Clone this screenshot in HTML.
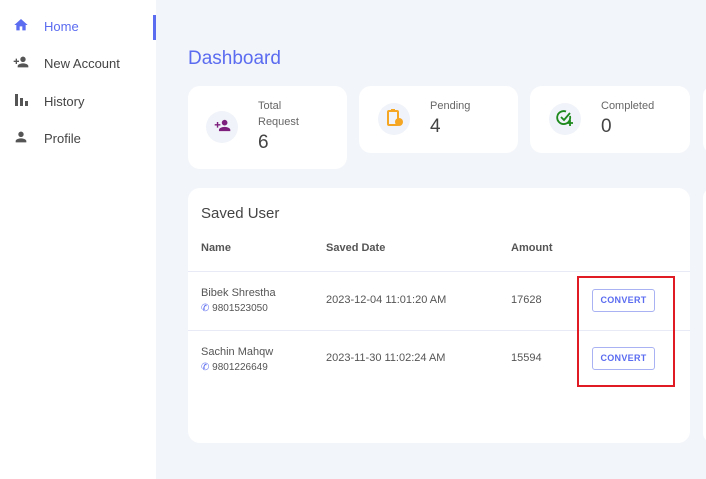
<!DOCTYPE html><html><head><style>
*{margin:0;padding:0;box-sizing:border-box}
body{width:706px;height:479px;overflow:hidden;background:#f2f5fa;font-family:"Liberation Sans",sans-serif;position:relative}
.a{position:absolute}
.side{left:0;top:0;width:156px;height:479px;background:#fff}
.card{background:#fff;border-radius:12px}
.ic{width:32px;height:32px;border-radius:50%;background:#f0f3f9}
.lbl{font-size:11px;color:#666;line-height:16px}
.num{font-size:19px;color:#444}
.th{font-size:11px;color:#555;font-weight:bold;top:242px}
.td{font-size:11px;color:#555}
.btn{width:63px;height:23px;border:1px solid #a9b2f2;border-radius:3px;color:#5b6cf0;font-size:9px;font-weight:bold;text-align:center;line-height:21px;letter-spacing:.3px}
</style></head><body>
<div class="a side"></div>
<div class="a" style="left:153px;top:15px;width:3px;height:25px;background:#5b6cf0"></div>
<svg class="a" style="left:12px;top:17px" width="18" height="16" viewBox="0 0 24 24"><path d="M10 20v-6h4v6h5v-8h3L12 3 2 12h3v8z" fill="#5b6cf0"/></svg>
<div class="a" style="left:44px;top:19px;font-size:13px;color:#5b6cf0">Home</div>
<svg class="a" style="left:11px;top:54px" width="20" height="16" viewBox="0 0 24 24"><path d="M15 12c2.2 0 4-1.8 4-4s-1.8-4-4-4-4 1.8-4 4 1.8 4 4 4zm-9-2V7H4v3H1v2h3v3h2v-3h3v-2H6zm9 4c-2.7 0-8 1.3-8 4v2h16v-2c0-2.7-5.3-4-8-4z" fill="#555"/></svg>
<div class="a" style="left:44px;top:56px;font-size:13px;color:#444">New Account</div>
<svg class="a" style="left:14px;top:93px" width="16" height="14" viewBox="0 0 16 14"><rect x="1" y="1" width="3" height="12" fill="#555"/><rect x="6" y="5" width="3" height="8" fill="#555"/><rect x="11" y="8" width="3" height="5" fill="#555"/></svg>
<div class="a" style="left:44px;top:94px;font-size:13px;color:#444">History</div>
<svg class="a" style="left:12px;top:129px" width="18" height="16" viewBox="0 0 24 24"><path d="M12 12c2.2 0 4-1.8 4-4s-1.8-4-4-4-4 1.8-4 4 1.8 4 4 4zm0 2c-2.7 0-8 1.3-8 4v2h16v-2c0-2.7-5.3-4-8-4z" fill="#555"/></svg>
<div class="a" style="left:44px;top:131px;font-size:13px;color:#444">Profile</div>

<div class="a" style="left:188px;top:48px;font-size:19px;color:#5b6cf0">Dashboard</div>

<div class="a card" style="left:188px;top:86px;width:159px;height:83px"></div>
<div class="a ic" style="left:206px;top:111px"></div>
<svg class="a" style="left:213px;top:117px" width="19" height="17" viewBox="0 0 24 24"><path d="M15 12c2.2 0 4-1.8 4-4s-1.8-4-4-4-4 1.8-4 4 1.8 4 4 4zm-9-2V7H4v3H1v2h3v3h2v-3h3v-2H6zm9 4c-2.7 0-8 1.3-8 4v2h16v-2c0-2.7-5.3-4-8-4z" fill="#7d1f7d"/></svg>
<div class="a lbl" style="left:258px;top:98px">Total<br>Request</div>
<div class="a num" style="left:258px;top:132px">6</div>

<div class="a card" style="left:359px;top:86px;width:159px;height:67px"></div>
<div class="a ic" style="left:378px;top:103px"></div>
<svg class="a" style="left:386px;top:108px" width="18" height="20" viewBox="0 0 18 20"><rect x="2" y="3" width="10" height="14" rx="1" fill="none" stroke="#f5a623" stroke-width="2"/><rect x="5" y="1" width="4" height="3" fill="#f5a623"/><circle cx="13" cy="14" r="4" fill="#f5a623"/></svg>
<div class="a lbl" style="left:430px;top:98px">Pending</div>
<div class="a num" style="left:430px;top:116px">4</div>

<div class="a card" style="left:530px;top:86px;width:160px;height:67px"></div>
<div class="a ic" style="left:549px;top:103px"></div>
<svg class="a" style="left:556px;top:109px" width="18" height="18" viewBox="0 0 18 18"><path d="M14 7A6.5 6.5 0 1 1 10 2.5" fill="none" stroke="#1e8a1e" stroke-width="1.8"/><path d="M5 8l3 3 6-7" fill="none" stroke="#1e8a1e" stroke-width="1.8"/><path d="M14 11v6M11 14h6" stroke="#1e8a1e" stroke-width="1.8"/></svg>
<div class="a lbl" style="left:601px;top:98px">Completed</div>
<div class="a num" style="left:601px;top:116px">0</div>
<div class="a card" style="left:703px;top:86px;width:20px;height:67px"></div>

<div class="a card" style="left:188px;top:188px;width:502px;height:255px"></div>
<div class="a card" style="left:703px;top:188px;width:20px;height:255px"></div>
<div class="a" style="left:201px;top:205px;font-size:15px;color:#444">Saved User</div>
<div class="a th" style="left:201px">Name</div>
<div class="a th" style="left:326px">Saved Date</div>
<div class="a th" style="left:511px">Amount</div>
<div class="a" style="left:188px;top:271px;width:502px;height:1px;background:#e8ebf5"></div>
<div class="a" style="left:188px;top:330px;width:502px;height:1px;background:#e8ebf5"></div>

<div class="a td" style="left:201px;top:287px">Bibek Shrestha</div>
<div class="a" style="left:201px;top:303px;font-size:10px;color:#555"><span style="color:#5b6cf0">&#9990;</span> 9801523050</div>
<div class="a td" style="left:326px;top:294px">2023-12-04 11:01:20 AM</div>
<div class="a td" style="left:511px;top:294px">17628</div>
<div class="a btn" style="left:592px;top:289px">CONVERT</div>

<div class="a td" style="left:201px;top:346px">Sachin Mahqw</div>
<div class="a" style="left:201px;top:362px;font-size:10px;color:#555"><span style="color:#5b6cf0">&#9990;</span> 9801226649</div>
<div class="a td" style="left:326px;top:352px">2023-11-30 11:02:24 AM</div>
<div class="a td" style="left:511px;top:352px">15594</div>
<div class="a btn" style="left:592px;top:347px">CONVERT</div>

<div class="a" style="left:577px;top:276px;width:98px;height:111px;border:2px solid #e01b24"></div>
</body></html>
